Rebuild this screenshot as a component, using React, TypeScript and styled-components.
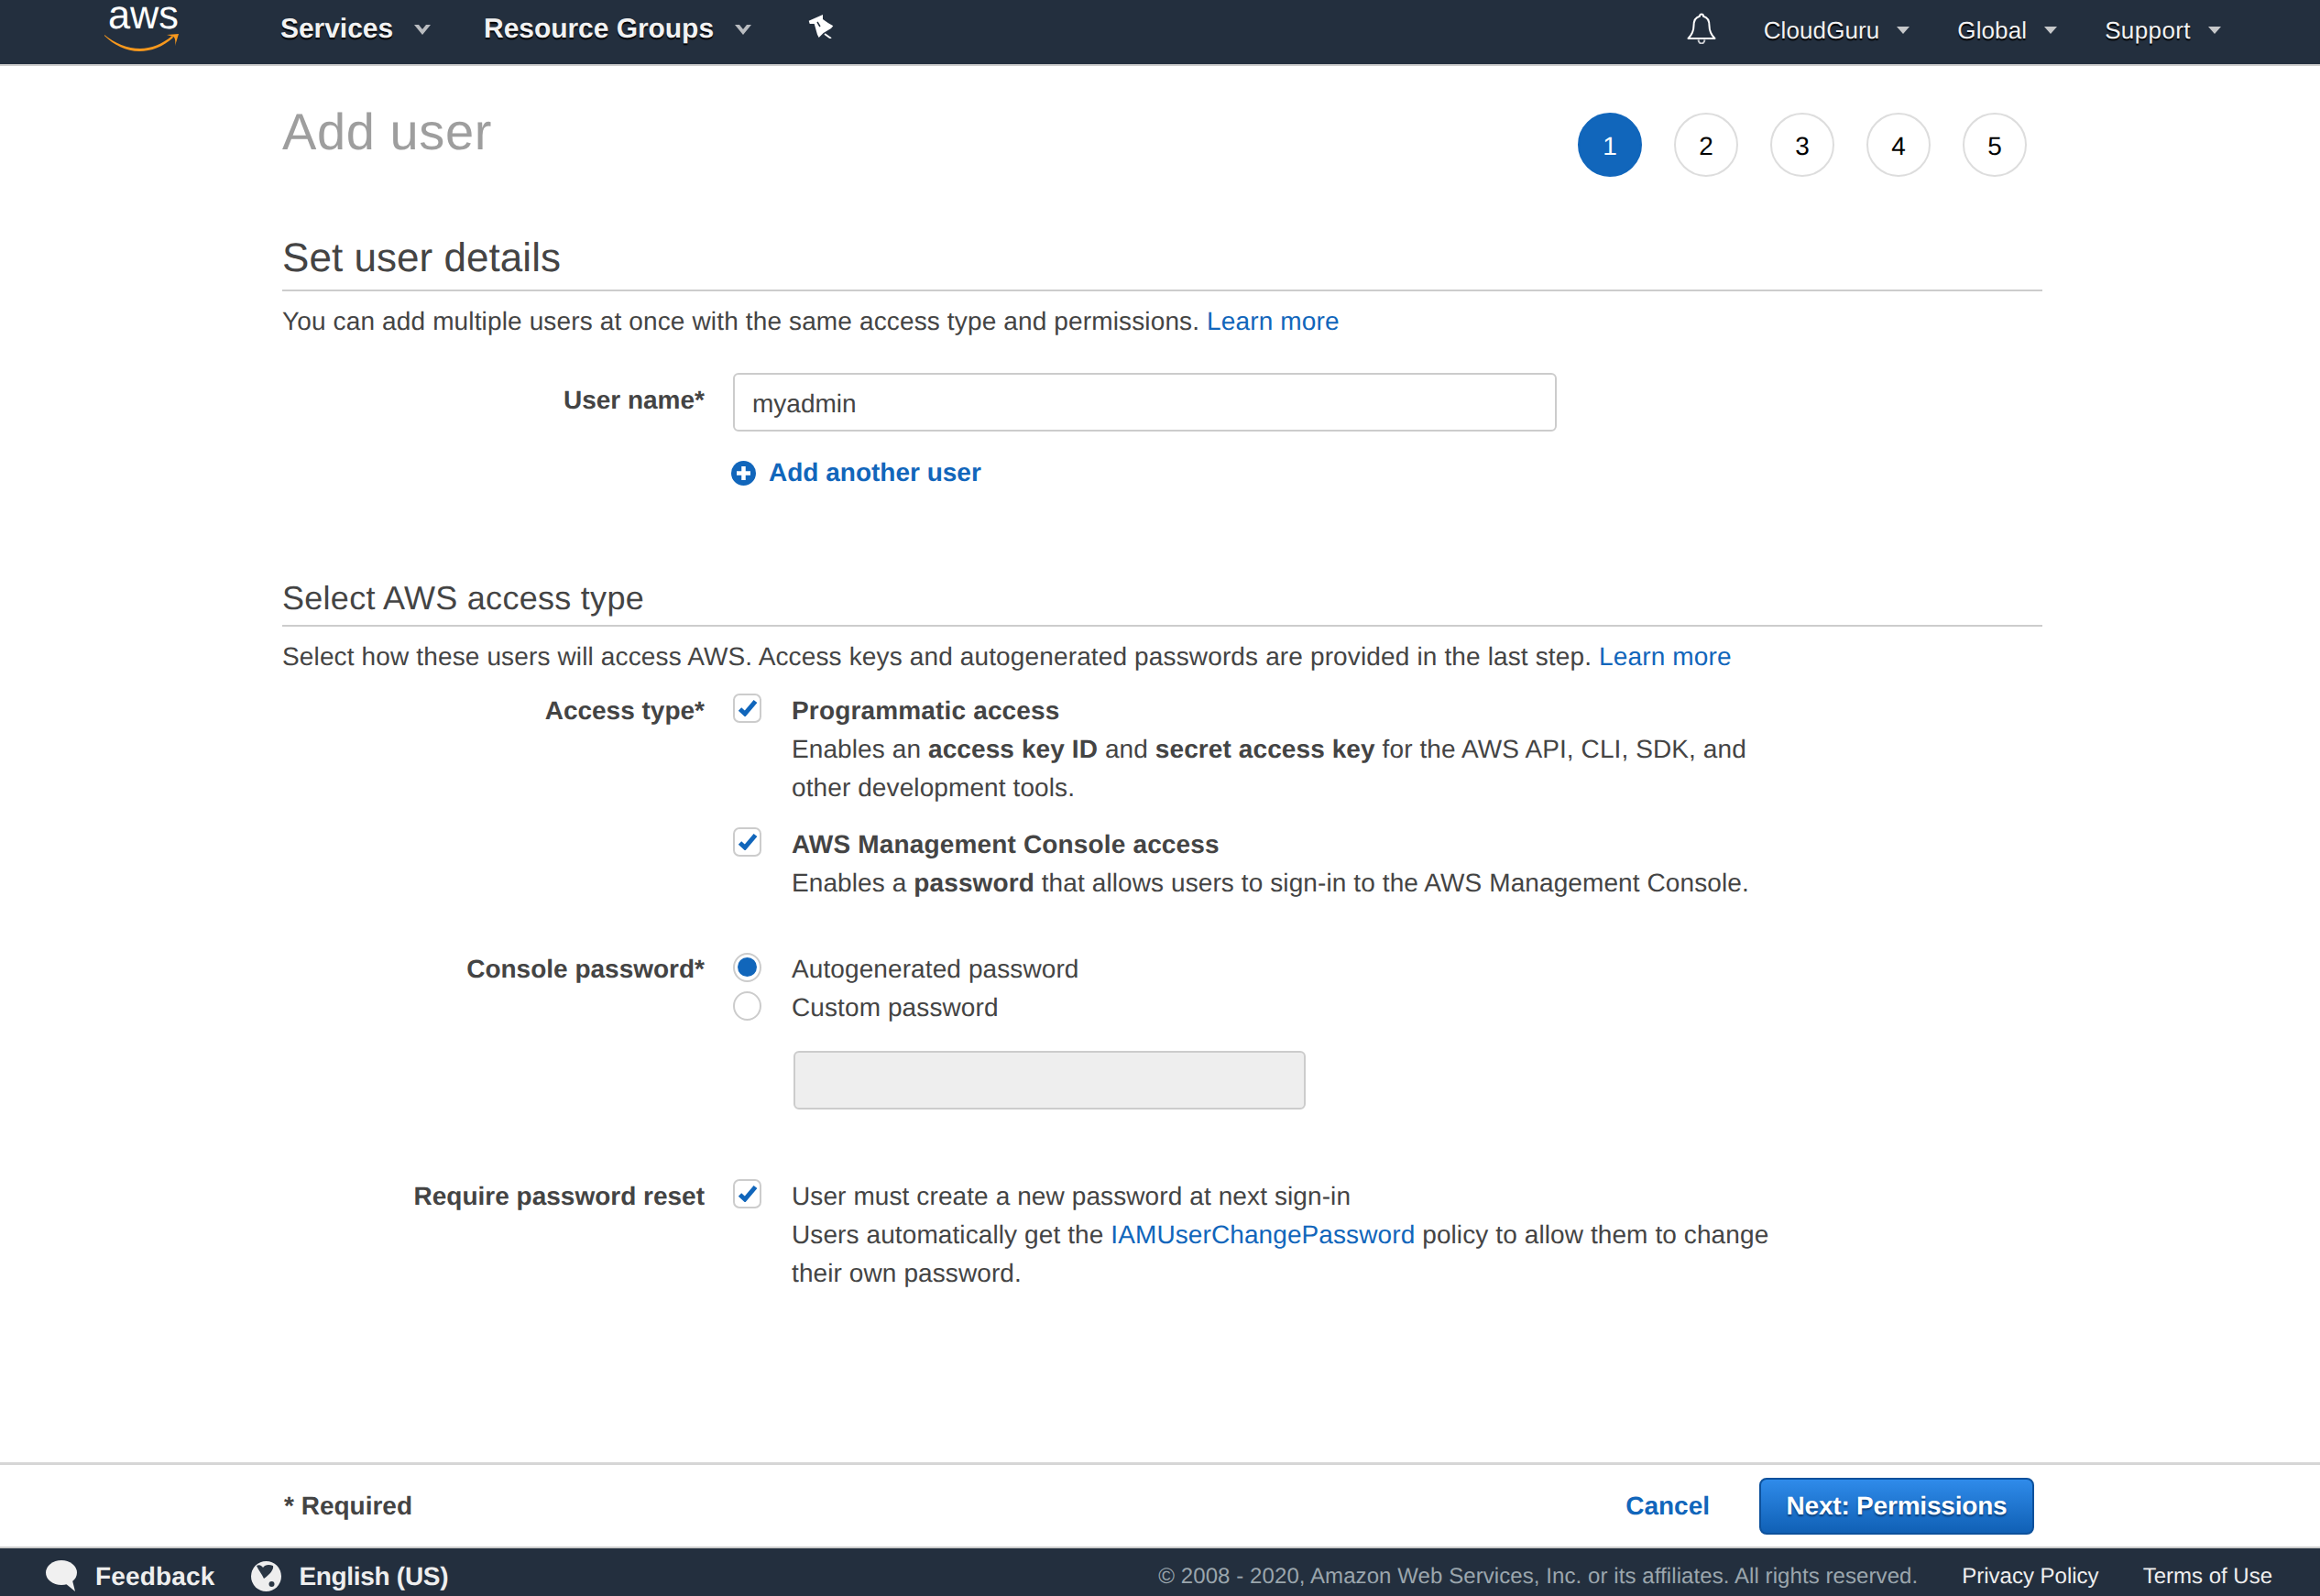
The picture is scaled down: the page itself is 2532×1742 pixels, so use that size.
import React from "react";
import styled, { createGlobalStyle } from "styled-components";

const Global = createGlobalStyle`
  html, body { margin: 0; padding: 0; background: #fff; }
  body { font-family: "Liberation Sans", Arial, sans-serif; font-size: 28px; line-height: 42px; color: #444; text-rendering: geometricPrecision; }
  input, button { text-rendering: geometricPrecision; }
  * { box-sizing: border-box; }
`;

const Page = styled.div`
  height: 1742px;
  display: flex;
  flex-direction: column;
  overflow: hidden;
`;

/* ---------- top navigation ---------- */
const TopNav = styled.header`
  flex: none;
  height: 72px;
  background: #232f3e;
  border-bottom: 2px solid #ccc;
  padding: 0 108px 8px 115px;
  display: flex;
  align-items: center;
`;
const Logo = styled.svg`
  width: 81px;
  height: 50px;
  margin-right: 110px;
  flex: none;
  overflow: visible;
`;
const MainMenu = styled.span<{ $gap: number }>`
  display: inline-flex;
  align-items: center;
  gap: 23px;
  margin-right: ${(p) => p.$gap}px;
  padding-top: 2px;
  font-size: 30px;
  font-weight: 700;
  letter-spacing: -0.05px;
  color: #f2f2f2;
  text-shadow: 0 2px 1px #000;
`;
const RightMenu = styled.span<{ $track: number }>`
  display: inline-flex;
  align-items: center;
  gap: 19px;
  margin-left: 52px;
  padding-top: 3px;
  font-size: 26px;
  letter-spacing: ${(p) => p.$track}px;
  color: #f2f2f2;
  text-shadow: 0 2px 1px #000;
`;
const Spacer = styled.span`
  flex: 1;
`;
const PinIcon = styled.svg`
  flex: none;
  display: block;
  margin-top: -4px;
`;
const BellIcon = styled.svg`
  flex: none;
  display: block;
`;
const Caret = styled.svg<{ $w: number; $h: number }>`
  width: ${(p) => p.$w}px;
  height: ${(p) => p.$h}px;
  flex: none;
  display: block;
`;

/* ---------- main content ---------- */
const Main = styled.main`
  flex: 1;
  padding: 0 303px 0 308px;
`;
const Head = styled.div`
  height: 188px;
  display: flex;
  justify-content: space-between;
  align-items: flex-start;
  padding-top: 44px;
`;
const Title = styled.h1`
  margin: 0;
  font-size: 56px;
  line-height: 56px;
  font-weight: 400;
  letter-spacing: 0.6px;
  color: #9e9e9e;
`;
const Steps = styled.ol`
  list-style: none;
  margin: 7px 17px 0 0;
  padding: 0;
  display: flex;
  gap: 35px;
`;
const Step = styled.li<{ $active?: boolean }>`
  width: 70px;
  height: 70px;
  border-radius: 50%;
  border: 2px solid ${(p) => (p.$active ? "#1166bb" : "#ddd")};
  background: ${(p) => (p.$active ? "#1166bb" : "#fff")};
  color: ${(p) => (p.$active ? "#fff" : "#000")};
  font-size: 28px;
  line-height: 70px;
  text-align: center;
`;
const SectionTitle = styled.h2<{ $size: number; $pad: number; $track: number }>`
  margin: 0;
  font-size: ${(p) => p.$size}px;
  line-height: ${(p) => p.$size}px;
  padding-bottom: ${(p) => p.$pad}px;
  font-weight: 400;
  letter-spacing: ${(p) => p.$track}px;
  color: #444;
  border-bottom: 2px solid #ccc;
`;
const Lead = styled.p<{ $top: number }>`
  margin: ${(p) => p.$top}px 0 0;
  letter-spacing: 0.14px;
`;
const Link = styled.a`
  color: #1166bb;
  text-decoration: none;
`;
const SectionGap = styled.div`
  height: 93px;
`;
const Row = styled.div<{ $top: number }>`
  display: grid;
  grid-template-columns: 461px 1fr;
  column-gap: 31px;
  margin-top: ${(p) => p.$top}px;
`;
const Label = styled.div<{ $pad?: number }>`
  text-align: right;
  font-weight: 700;
  padding-top: ${(p) => p.$pad ?? 0}px;
`;
const TextInput = styled.input`
  display: block;
  width: 899px;
  height: 64px;
  border: 2px solid #ccc;
  border-radius: 6px;
  padding: 4px 20px 0 19px;
  font: 28px "Liberation Sans", Arial, sans-serif;
  color: #444;
  background: #fff;
  outline: none;
`;
const AddUser = styled.a`
  display: inline-flex;
  align-items: center;
  gap: 14px;
  margin: 24px 0 0 -2px;
  font-weight: 700;
  color: #1166bb;
  text-decoration: none;
`;
const Option = styled.div<{ $top?: number }>`
  display: grid;
  grid-template-columns: 31px 1fr;
  column-gap: 33px;
  margin-top: ${(p) => p.$top ?? 0}px;
`;
const Check = styled.span`
  width: 31px;
  height: 32px;
  margin-top: 2px;
  border: 2px solid #ccc;
  border-radius: 7px;
  background: #fff;
  display: flex;
  align-items: center;
  justify-content: center;
`;
const Radio = styled.span`
  width: 31px;
  height: 32px;
  margin-top: 3px;
  border: 2px solid #ccc;
  border-radius: 50%;
  background: #fff;
  display: flex;
  align-items: center;
  justify-content: center;
`;
const RadioDot = styled.span`
  width: 21px;
  height: 21px;
  border-radius: 50%;
  background: #1166bb;
`;
const OptionText = styled.div`
  max-width: 1090px;
  letter-spacing: 0.1px;
`;
const OptionTitle = styled.div`
  font-weight: 700;
  letter-spacing: 0.16px;
`;
const DisabledInput = styled.div`
  width: 559px;
  height: 64px;
  margin: 26px 0 0 66px;
  border: 2px solid #ccc;
  border-radius: 6px;
  background: #eee;
`;

/* ---------- action bar ---------- */
const ActionBar = styled.div`
  flex: none;
  height: 92px;
  border-top: 3px solid #d6d6d6;
  padding: 14px 312px 0 310px;
  display: flex;
  align-items: flex-start;
`;
const Required = styled.span`
  font-weight: 700;
  margin-top: 10px;
  flex: 1;
`;
const Cancel = styled.a`
  font-weight: 700;
  color: #1166bb;
  margin: 10px 54px 0 0;
  text-decoration: none;
`;
const NextButton = styled.button`
  width: 300px;
  height: 62px;
  border: 2px solid #0d519c;
  border-radius: 8px;
  background: linear-gradient(#2f8bea, #1060b5);
  color: #fff;
  font: 700 28px "Liberation Sans", Arial, sans-serif;
  letter-spacing: -0.2px;
  text-shadow: 0 2px 2px #0a3d78;
  padding: 0;
`;

/* ---------- bottom bar ---------- */
const BottomBar = styled.footer`
  flex: none;
  height: 54px;
  background: #232f3e;
  border-top: 2px solid #ccc;
  padding: 10px 52px 0 50px;
  display: flex;
  align-items: center;
`;
const FooterItem = styled.span<{ $gap: number; $end: number; $track: number }>`
  display: inline-flex;
  align-items: center;
  gap: ${(p) => p.$gap}px;
  margin-right: ${(p) => p.$end}px;
  font-weight: 700;
  letter-spacing: ${(p) => p.$track}px;
  color: #eee;
  svg {
    margin-top: -2px;
  }
`;
const Copyright = styled.span`
  margin-left: auto;
  font-size: 24px;
  letter-spacing: 0.08px;
  color: #9ba6ad;
`;
const FooterLink = styled.a`
  margin-left: 48px;
  font-size: 24px;
  color: #eee;
  text-decoration: none;
`;

const BigCaret = () => (
  <Caret $w={18} $h={11} viewBox="0 0 18 11">
    <path d="M0 0h5l4 5 4-5h5L9 11z" fill="#b9bcc0" />
  </Caret>
);
const SmallCaret = () => (
  <Caret $w={14} $h={8} viewBox="0 0 14 8">
    <path d="M0 0h14L7 8z" fill="#c6c8ca" />
  </Caret>
);
const Tick = () => (
  <svg width="22" height="19" viewBox="0 0 22 19">
    <path d="M2.500 11 8 16 19.500 2.500" fill="none" stroke="#1166bb" strokeWidth="5" />
  </svg>
);

export default function App() {
  return (
    <Page>
      <Global />
      <TopNav>
        <Logo viewBox="0 0 81 50" aria-label="aws">
          <text x="3" y="24.500" fontFamily="'Liberation Sans', Arial, sans-serif" fontSize="44" fill="#fff" textLength="77" lengthAdjust="spacingAndGlyphs">
            aws
          </text>
          <path d="M-1 32C10 41 24 47 38 47 50 47 62 42 73 33L74 35C63 45 50 50 37 50 23 50 9 43-1 33Z" fill="#f7981d" />
          <path d="M67 32 80 31 76 44C77 39 76 35 74 34Z" fill="#f7981d" />
        </Logo>
        <MainMenu $gap={58}>
          Services
          <BigCaret />
        </MainMenu>
        <MainMenu $gap={62}>
          Resource Groups
          <BigCaret />
        </MainMenu>
        <PinIcon width="28" height="26" viewBox="0 0 28 26">
          <path d="M16 0 .7 6.700 1.700 10 6.700 10 10 21.700 11.700 25 16.700 20 25 15 27.300 12.300 21.700 9 16 5Z" fill="#fff" />
          <path d="M18 21 25 26" stroke="#fff" strokeWidth="2" />
          <path d="M10 8 13 13" stroke="#232f3e" strokeWidth="1.500" />
        </PinIcon>
        <Spacer />
        <BellIcon width="32" height="34" viewBox="0 0 32 34">
          <path d="M16 1.500c1.400 0 2 1 2 2.200C23 5 24.500 9 24.500 14c0 6 1.500 9.500 6 14H1.500c4.500-4.500 6-8 6-14 0-5 1.500-9 6.500-10.300 0-1.200.6-2.200 2-2.200z" fill="none" stroke="#fff" strokeWidth="2" strokeLinejoin="round" />
          <path d="M12.500 29.500c.5 3 2 4 3.500 4s3-1 3.500-4" fill="none" stroke="#c9ccd0" strokeWidth="2" />
        </BellIcon>
        <RightMenu $track={0.1}>
          CloudGuru
          <SmallCaret />
        </RightMenu>
        <RightMenu $track={0.1}>
          Global
          <SmallCaret />
        </RightMenu>
        <RightMenu $track={0.4}>
          Support
          <SmallCaret />
        </RightMenu>
      </TopNav>

      <Main>
        <Head>
          <Title>Add user</Title>
          <Steps>
            <Step $active>1</Step>
            <Step>2</Step>
            <Step>3</Step>
            <Step>4</Step>
            <Step>5</Step>
          </Steps>
        </Head>

        <SectionTitle $size={44} $pad={12} $track={0.05}>Set user details</SectionTitle>
        <Lead $top={12}>
          You can add multiple users at once with the same access type and permissions. <Link>Learn more</Link>
        </Lead>
        <Row $top={35}>
          <Label $pad={9}>User name*</Label>
          <div>
            <TextInput defaultValue="myadmin" />
            <AddUser>
              <svg width="27" height="27" viewBox="0 0 27 27">
                <circle cx="13.500" cy="13.500" r="13.500" fill="#1166bb" />
                <path d="M13.500 6v15M6 13.500h15" stroke="#fff" strokeWidth="4.500" />
              </svg>
              Add another user
            </AddUser>
          </div>
        </Row>

        <SectionGap />
        <SectionTitle $size={36} $pad={11} $track={0.28}>Select AWS access type</SectionTitle>
        <Lead $top={12}>
          Select how these users will access AWS. Access keys and autogenerated passwords are provided in the last step. <Link>Learn more</Link>
        </Lead>

        <Row $top={17}>
          <Label>Access type*</Label>
          <div>
            <Option>
              <Check><Tick /></Check>
              <OptionText>
                <OptionTitle>Programmatic access</OptionTitle>
                Enables an <b>access key ID</b> and <b>secret access key</b> for the AWS API, CLI, SDK, and other development tools.
              </OptionText>
            </Option>
            <Option $top={20}>
              <Check><Tick /></Check>
              <OptionText>
                <OptionTitle>AWS Management Console access</OptionTitle>
                Enables a <b>password</b> that allows users to sign-in to the AWS Management Console.
              </OptionText>
            </Option>
          </div>
        </Row>

        <Row $top={52}>
          <Label>Console password*</Label>
          <div>
            <Option>
              <Radio><RadioDot /></Radio>
              <OptionText>Autogenerated password</OptionText>
            </Option>
            <Option>
              <Radio />
              <OptionText>Custom password</OptionText>
            </Option>
            <DisabledInput />
          </div>
        </Row>

        <Row $top={74}>
          <Label>Require password reset</Label>
          <Option>
            <Check><Tick /></Check>
            <OptionText>
              User must create a new password at next sign-in
              <br />
              Users automatically get the <Link>IAMUserChangePassword</Link> policy to allow them to change their own password.
            </OptionText>
          </Option>
        </Row>
      </Main>

      <ActionBar>
        <Required>* Required</Required>
        <Cancel>Cancel</Cancel>
        <NextButton>Next: Permissions</NextButton>
      </ActionBar>

      <BottomBar>
        <FooterItem $gap={20} $end={40} $track={0.15}>
          <svg width="34" height="34" viewBox="0 0 34 34">
            <ellipse cx="17" cy="13.500" rx="17" ry="13.500" fill="#f0f0f0" />
            <path d="M21 25 32 34 29 22Z" fill="#f0f0f0" />
          </svg>
          Feedback
        </FooterItem>
        <FooterItem $gap={19} $end={0} $track={-0.3}>
          <svg width="33" height="33" viewBox="0 0 33 33">
            <circle cx="16.500" cy="16.500" r="16.500" fill="#eee" />
            <path d="M6 5C9 3 12 5 13 7 15 4 19 3 24 5 25 9 21 14 14 19 12 14 8 10 6 5Z" fill="#2a3644" />
            <circle cx="22.500" cy="25" r="3" fill="#2a3644" />
          </svg>
          English (US)
        </FooterItem>
        <Copyright>© 2008 - 2020, Amazon Web Services, Inc. or its affiliates. All rights reserved.</Copyright>
        <FooterLink>Privacy Policy</FooterLink>
        <FooterLink>Terms of Use</FooterLink>
      </BottomBar>
    </Page>
  );
}
